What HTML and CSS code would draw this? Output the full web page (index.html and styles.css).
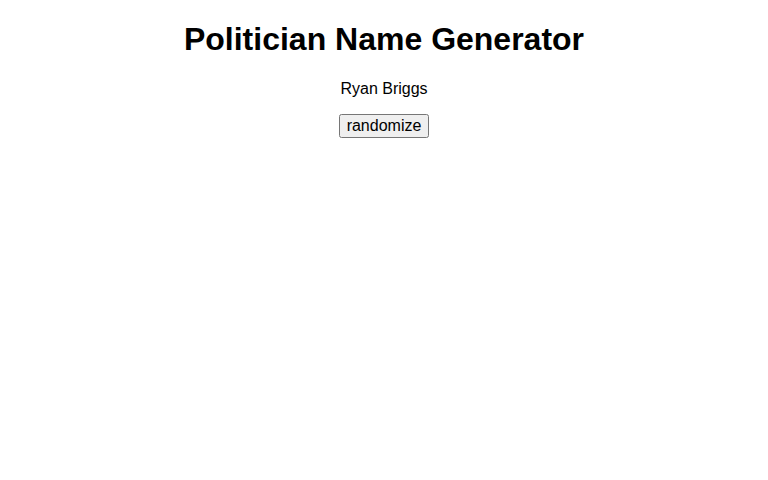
FILE: index.html
```html
<!DOCTYPE html>
<html lang="en">
<head>
<meta charset="utf-8">
<title>Politician Name Generator</title>
<link rel="stylesheet" href="styles.css">
</head>
<body>
<div class="app">
  <h1 class="title">Politician Name Generator</h1>
  <p class="name">Ryan Briggs</p>
  <button class="randomize" type="button">randomize</button>
</div>
</body>
</html>
```
FILE: styles.css
```css
body {
  margin: 0 8px 8px;
  font-family: "Liberation Sans", Arial, sans-serif;
  background: #fff;
  color: #000;
}

.app {
  text-align: center;
}

.title {
  font-size: 32px;
  font-weight: bold;
  margin: 21.44px 0;
}

.name {
  font-size: 16px;
  margin: 16px 0;
}

.randomize {
  font-family: inherit;
  font-size: 16px;
}
```
